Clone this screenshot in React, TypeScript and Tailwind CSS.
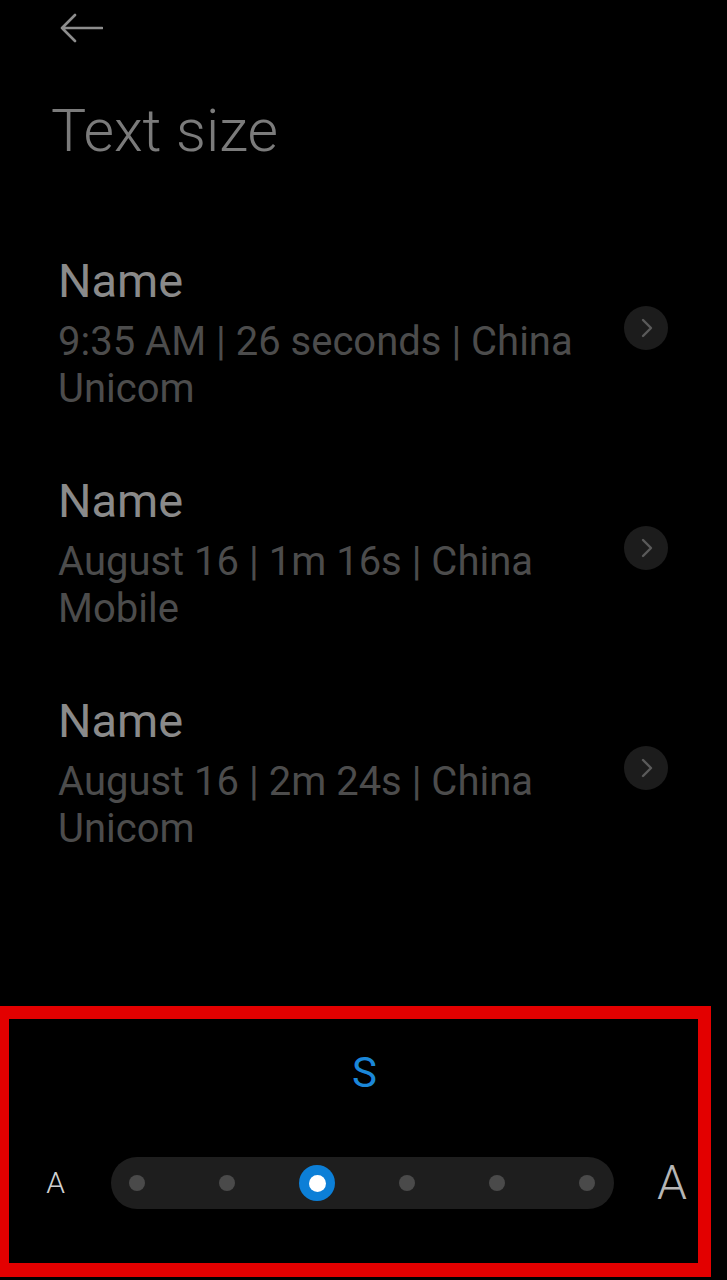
import React from "react";

const items = [
  { name: "Name", sub: ["9:35 AM | 26 seconds | China", "Unicom"] },
  { name: "Name", sub: ["August 16 | 1m 16s | China", "Mobile"] },
  { name: "Name", sub: ["August 16 | 2m 24s | China", "Unicom"] },
];

function Chevron() {
  return (
    <div className="w-[44px] h-[44px] rounded-full bg-[#1c1c1c] flex items-center justify-center shrink-0 mt-[51px]">
      <svg width="12" height="20" viewBox="0 0 12 20" className="ml-[2px]">
        <polyline points="2,2 10,10 2,18" fill="none" stroke="#5a5a5a" strokeWidth="2.4" strokeLinecap="round" strokeLinejoin="round" />
      </svg>
    </div>
  );
}

export default function App() {
  const dots = [0, 1, 2, 3, 4, 5];
  return (
    <div className="relative w-full h-[1280px] bg-black overflow-hidden flex flex-col" style={{ fontFamily: "Roboto, 'Liberation Sans', sans-serif" }}>
      <div className="pt-[13px] pl-[59px]">
        <svg width="44" height="30" viewBox="0 0 44 30">
          <path d="M3 15 H43 M16 2 L3 15 L16 28" fill="none" stroke="#8d8d8d" strokeWidth="2.6" strokeLinecap="round" strokeLinejoin="round" />
        </svg>
      </div>
      <div className="pl-[51px] mt-[54px] text-[59px] leading-[68px] font-light text-[#7b7b7b]">Text size</div>

      <div className="mt-[90px] pl-[58px] pr-[59px] flex flex-col gap-[63px]">
        {items.map((it, i) => (
          <div key={i} className="flex items-start justify-between">
            <div className="flex flex-col">
              <div className="text-[47px] leading-[52px] text-[#8a8a8a]">{it.name}</div>
              <div className="mt-[11px] text-[40px] leading-[47px] text-[#4c4c4c]">
                {it.sub[0]}
                <br />
                {it.sub[1]}
              </div>
            </div>
            <Chevron />
          </div>
        ))}
      </div>

      <div className="mt-auto pb-[71px] flex flex-col">
        <div className="text-center text-[42px] leading-[50px] text-[#1b87d9] pl-[2px]">S</div>
        <div className="mt-[59px] flex items-center">
          <div className="w-[111px] text-center text-[30px] leading-[30px] font-light text-[#d0d0d0]">A</div>
          <div className="w-[503px] h-[52px] rounded-full bg-[#1e1e1e] flex items-center pl-[8px] gap-[54px]">
            {dots.map((d) =>
              d === 2 ? (
                <div key={d} className="w-[36px] h-[36px] flex items-center justify-center">
                  <div className="w-[36px] h-[36px] rounded-full bg-[#0c7fd7] flex items-center justify-center">
                    <div className="w-[17px] h-[17px] rounded-full bg-white" />
                  </div>
                </div>
              ) : (
                <div key={d} className="w-[36px] h-[36px] flex items-center justify-center">
                  <div className="w-[16px] h-[16px] rounded-full bg-[#4a4a4a]" />
                </div>
              )
            )}
          </div>
          <div className="flex-1 text-center text-[48px] leading-[48px] font-light text-[#b5b5b5] pl-[3px]">A</div>
        </div>
      </div>

      <div className="absolute left-0 top-[1006px] w-[711px] h-[271px] border-[#e30000] border-l-[9px] border-t-[13px] border-r-[13px] border-b-[14px]" />
    </div>
  );
}
